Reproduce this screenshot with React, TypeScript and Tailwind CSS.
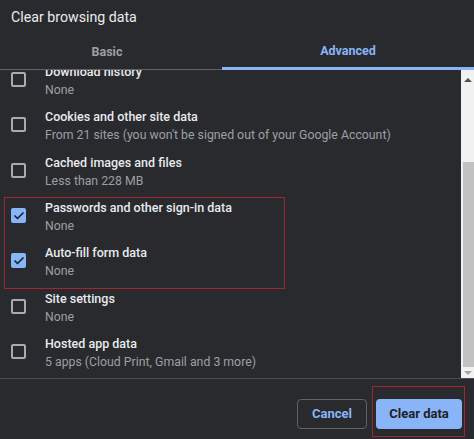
import { Check } from 'lucide-react';

type Item = {
  title: string;
  detail: string;
  checked: boolean;
};

const items: Item[] = [
  { title: 'Download history', detail: 'None', checked: false },
  { title: 'Cookies and other site data', detail: "From 21 sites (you won't be signed out of your Google Account)", checked: false },
  { title: 'Cached images and files', detail: 'Less than 228 MB', checked: false },
  { title: 'Passwords and other sign-in data', detail: 'None', checked: true },
  { title: 'Auto-fill form data', detail: 'None', checked: true },
  { title: 'Site settings', detail: 'None', checked: false },
  { title: 'Hosted app data', detail: '5 apps (Cloud Print, Gmail and 3 more)', checked: false }
];

function CheckBox({ checked }: { checked: boolean }) {
  if (checked) {
    return (
      <div className="flex h-[15px] w-[15px] shrink-0 items-center justify-center rounded-[2px] bg-[#8ab4f8]">
        <Check size={12} strokeWidth={3.5} className="text-[#1c2333]" />
      </div>
    );
  }
  return <div className="h-[15px] w-[15px] shrink-0 rounded-[2px] border-2 border-[#a8abb0]" />;
}

function Row({ item }: { item: Item }) {
  return (
    <div className="flex h-[45.33px] items-center">
      <div className="ml-[11px]">
        <CheckBox checked={item.checked} />
      </div>
      <div className="ml-[19px] mt-[3px] flex flex-col">
        <span className="text-[12.5px] leading-[19px] font-medium text-[#e8eaed]">{item.title}</span>
        <span className="text-[12.3px] leading-[19px] text-[#9aa0a6]">{item.detail}</span>
      </div>
    </div>
  );
}

function ScrollBar() {
  return (
    <div className="flex h-full w-[13px] shrink-0 flex-col bg-[#f1f1f1]">
      <div className="flex h-[17px] items-center justify-center pt-[2px]">
        <div className="h-0 w-0 border-x-[4px] border-b-[4px] border-x-transparent border-b-[#505050]" />
      </div>
      <div className="h-[75px]" />
      <div className="ml-[2px] flex-1 bg-[#c1c1c1]" />
      <div className="flex h-[11px] items-center justify-center">
        <div className="h-0 w-0 border-x-[4px] border-t-[4px] border-x-transparent border-t-[#a3a3a3]" />
      </div>
    </div>
  );
}

export default function App() {
  return (
    <div className="flex h-[439px] w-[474px] flex-col overflow-hidden bg-[#292a2d] font-['Roboto',sans-serif]">
      <div className="flex h-[35px] items-center px-[11px] pt-[1px]">
        <h1 className="text-[14.2px] text-[#e8eaed]">Clear browsing data</h1>
      </div>
      <div className="flex h-[35px] text-[12.5px] font-bold">
        <div className="flex w-[222px] items-center justify-center border-b border-[#5f6368] pr-[8px] text-[#9aa0a6]">
          Basic
        </div>
        <div className="flex flex-1 items-center justify-center border-b-[3px] border-[#8ab4f8] pt-[1px] text-[#8ab4f8]">
          Advanced
        </div>
      </div>
      <div className="flex h-[308px] overflow-hidden">
        <div className="flex-1 overflow-hidden">
          <div className="-mt-[13px]">
            {items.slice(0, 3).map((item) => (
              <Row key={item.title} item={item} />
            ))}
            <div className="relative">
              {items.slice(3, 5).map((item) => (
                <Row key={item.title} item={item} />
              ))}
              <div className="pointer-events-none absolute left-[4px] top-[4px] -bottom-[5px] w-[281px] border border-[#a3262e]" />
            </div>
            {items.slice(5).map((item) => (
              <Row key={item.title} item={item} />
            ))}
          </div>
        </div>
        <ScrollBar />
      </div>
      <div className="flex flex-1 items-start justify-end gap-[9px] border-t border-[#4a4c50] pr-[12px] pt-[20px]">
        <button
          type="button"
          className="h-[30px] w-[70px] rounded-[4px] border border-[#5f6368] text-[13px] font-bold text-[#8ab4f8]"
        >
          Cancel
        </button>
        <div className="relative">
          <button
            type="button"
            className="h-[30px] w-[86px] rounded-[4px] bg-[#8ab4f8] text-[13px] font-bold text-[#202124]"
          >
            Clear data
          </button>
          <div className="pointer-events-none absolute -left-[4px] -right-[3px] -top-[13px] -bottom-[8px] border border-[#a3262e]" />
        </div>
      </div>
    </div>
  );
}
